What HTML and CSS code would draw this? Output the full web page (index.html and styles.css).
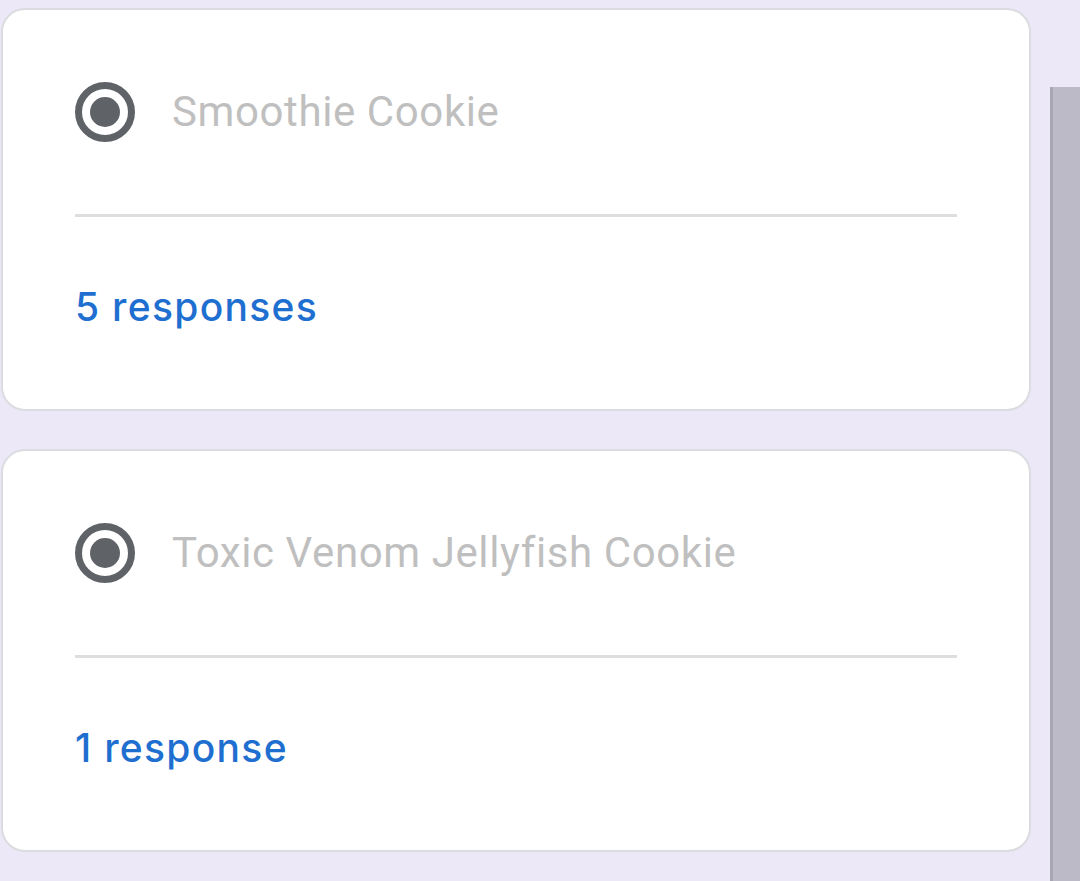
FILE: index.html
```html
<!DOCTYPE html>
<html>
<head>
<meta charset="utf-8">
<link rel="stylesheet" href="styles.css">
</head>
<body>
<div class="page">
  <div class="list">
    <div class="card">
      <div class="option">
        <span class="radio"><span class="dot"></span></span>
        <span class="label">Smoothie Cookie</span>
      </div>
      <div class="divider"></div>
      <div class="count">5 responses</div>
    </div>
    <div class="card">
      <div class="option">
        <span class="radio"><span class="dot"></span></span>
        <span class="label">Toxic Venom Jellyfish Cookie</span>
      </div>
      <div class="divider"></div>
      <div class="count">1 response</div>
    </div>
  </div>
  <div class="track"><div class="thumb"></div></div>
</div>
</body>
</html>
```
FILE: styles.css
```css
html, body {
  margin: 0;
  padding: 0;
  background: #ece8f7;
  height: 100%;
  overflow: hidden;
}
.page {
  display: flex;
  height: 881px;
}
.list {
  width: 1032px;
  padding: 8px 0 0 1px;
  display: flex;
  flex-direction: column;
  gap: 38px;
}
.card {
  box-sizing: border-box;
  width: 1030px;
  height: 403px;
  background: #fff;
  border: 2px solid #dadce0;
  border-radius: 24px;
  padding: 72px 72px 0 72px;
}
.option {
  display: flex;
  align-items: center;
  height: 60px;
  gap: 37px;
}
.radio {
  box-sizing: border-box;
  width: 60px;
  height: 60px;
  border: 7px solid #5f6368;
  border-radius: 50%;
  display: flex;
  align-items: center;
  justify-content: center;
  flex: none;
}
.dot {
  width: 30px;
  height: 30px;
  border-radius: 50%;
  background: #5f6368;
}
.label {
  font-family: Roboto, "Noto Sans", sans-serif;
  font-size: 42px;
  line-height: 50px;
  letter-spacing: 0.6px;
  color: #bfbfbf;
}
.divider {
  margin-top: 72px;
  height: 3px;
  width: 882px;
  background: #dedede;
}
.count {
  margin-top: 68px;
  font-family: Inter, "Open Sans", sans-serif;
  font-weight: 500;
  font-size: 39px;
  line-height: 44px;
  letter-spacing: 1.3px;
  color: #1f6fd0;
}
.track {
  margin-left: 17px;
  padding-top: 87px;
  width: 30px;
}
.thumb {
  box-sizing: border-box;
  height: 800px;
  background: #bdbac8;
  border-left: 3px solid #a9a6b4;
}
```
